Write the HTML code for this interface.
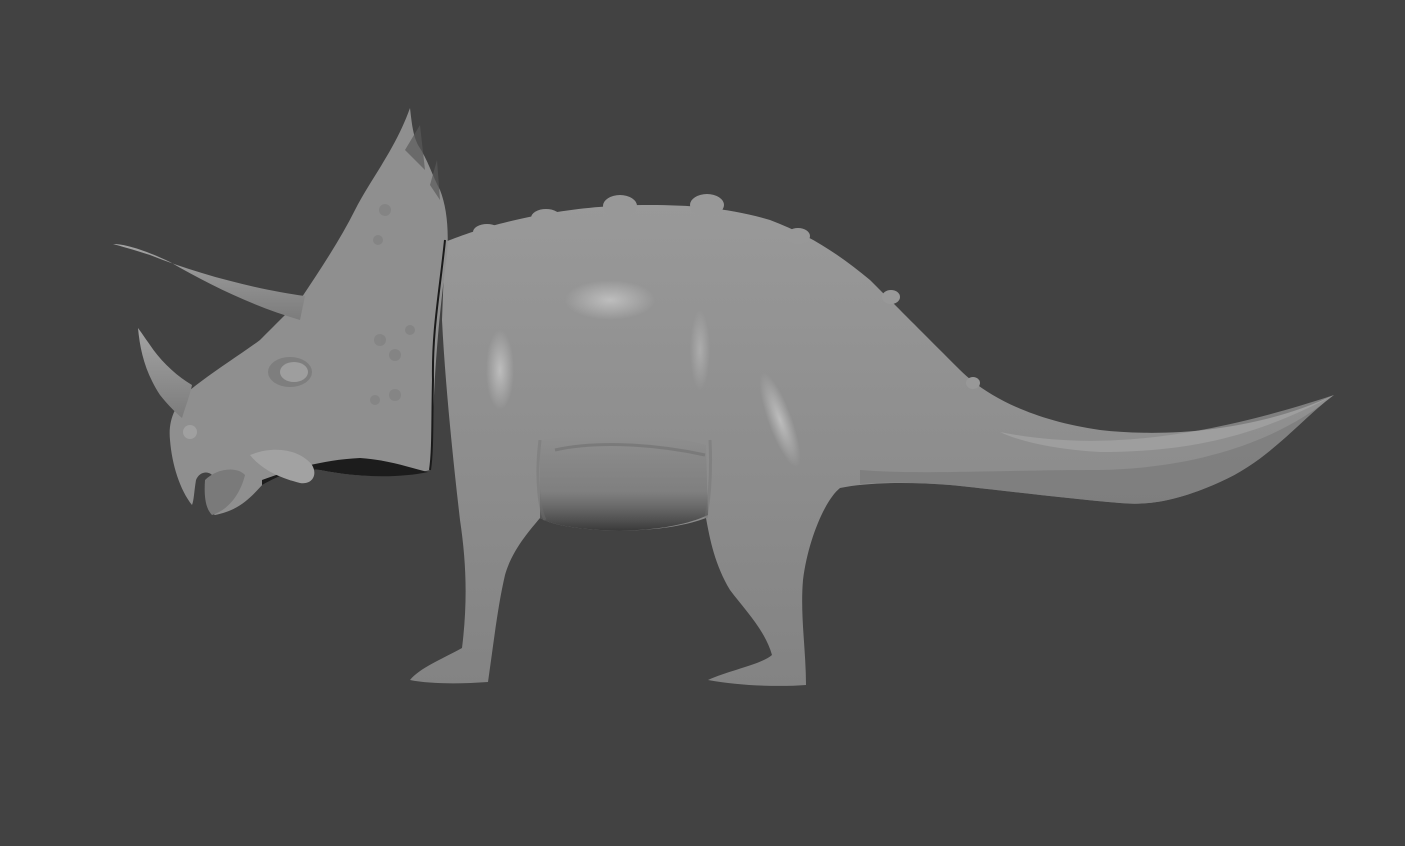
<!DOCTYPE html>
<html><head><meta charset="utf-8"><style>
html,body{margin:0;padding:0;background:#424242;width:1405px;height:846px;overflow:hidden}
svg{display:block}
</style></head><body>
<svg width="1405" height="846" viewBox="0 0 1405 846" xmlns="http://www.w3.org/2000/svg">
<defs>
<linearGradient id="bg" x1="0" y1="0" x2="0" y2="1">
<stop offset="0" stop-color="#999999"/><stop offset="0.5" stop-color="#8e8e8e"/><stop offset="1" stop-color="#838383"/>
</linearGradient>
<linearGradient id="belly" x1="0" y1="0" x2="0" y2="1">
<stop offset="0" stop-color="#7c7c7c" stop-opacity="0"/><stop offset="0.6" stop-color="#7a7a7a" stop-opacity="0.7"/><stop offset="1" stop-color="#3a3a3a"/>
</linearGradient>
<linearGradient id="tailg" x1="0" y1="0" x2="0" y2="1">
<stop offset="0" stop-color="#929292" stop-opacity="0"/><stop offset="1" stop-color="#6a6a6a"/>
</linearGradient>
<radialGradient id="hl" cx="0.5" cy="0.5" r="0.5">
<stop offset="0" stop-color="#c8c8c8" stop-opacity="0.8"/><stop offset="1" stop-color="#c8c8c8" stop-opacity="0"/>
</radialGradient>
<linearGradient id="horn" x1="0" y1="0" x2="0" y2="1">
<stop offset="0" stop-color="#a4a4a4"/><stop offset="1" stop-color="#7c7c7c"/>
</linearGradient>
</defs>

<path d="M445 242 C470 232 500 222 545 214 C580 208 610 205 650 205 C690 205 730 208 770 220 C810 235 840 255 870 280 C890 300 915 325 960 370 C985 395 1030 420 1100 430 C1170 438 1260 430 1334 395 C1300 420 1270 460 1220 482 C1180 500 1150 506 1120 503 C1060 498 1000 490 950 485 C910 482 870 482 840 488 C825 500 808 540 803 580 C800 615 806 650 806 685 C780 687 740 686 708 680 C730 670 760 665 772 655 C765 630 745 610 730 590 C715 565 710 540 706 518 C680 528 640 532 600 530 C570 528 550 524 540 518 C530 530 512 550 505 575 C498 605 494 640 488 682 C460 684 430 684 410 680 C420 668 440 660 462 648 C468 600 466 560 460 520 C452 450 445 380 442 320 Z" fill="url(#bg)"/>
<path d="M540 440 C600 430 660 432 706 445 L708 515 C680 528 640 532 600 530 C570 528 550 524 540 518 Z" fill="url(#belly)"/>
<path d="M860 470 C920 475 1000 470 1100 470 C1200 468 1280 440 1334 395 C1300 420 1270 460 1220 482 C1180 500 1150 506 1120 503 C1060 498 1000 490 950 485 C910 482 880 482 860 484 Z" fill="#777" opacity="0.6"/>
<path d="M1000 432 C1080 448 1180 446 1334 395 C1250 440 1180 452 1100 452 C1060 450 1020 442 1000 432Z" fill="#a8a8a8" opacity="0.6"/>
<g fill="#989898">
<ellipse cx="487" cy="232" rx="14" ry="8"/>
<ellipse cx="546" cy="218" rx="15" ry="9"/>
<ellipse cx="620" cy="206" rx="17" ry="11"/>
<ellipse cx="707" cy="205" rx="17" ry="11"/>
<ellipse cx="798" cy="236" rx="12" ry="8"/>
<ellipse cx="891" cy="297" rx="9" ry="7"/>
<ellipse cx="973" cy="383" rx="7" ry="6"/>
</g>
<ellipse cx="500" cy="370" rx="14" ry="40" fill="url(#hl)"/>
<ellipse cx="780" cy="420" rx="12" ry="50" fill="url(#hl)" transform="rotate(-20 780 420)"/>
<ellipse cx="610" cy="300" rx="45" ry="20" fill="url(#hl)"/>
<ellipse cx="700" cy="350" rx="10" ry="40" fill="url(#hl)" opacity="0.6"/>
<path d="M555 450 C600 440 660 445 705 455" stroke="#707070" stroke-width="3" fill="none" opacity="0.6"/>
<path d="M540 440 C535 480 540 510 545 520" stroke="#707070" stroke-width="3" fill="none" opacity="0.4"/>
<path d="M710 440 C712 480 708 505 706 518" stroke="#707070" stroke-width="3" fill="none" opacity="0.4"/>

<path d="M300 300 C320 270 340 240 355 210 C370 180 395 150 410 108 C412 125 413 135 418 145 C428 160 432 175 440 190 C448 210 450 240 445 270 C440 310 435 360 433 420 C432 445 433 460 430 470 C400 478 360 478 320 470 C300 468 290 470 265 482 C250 498 240 510 215 515 C205 510 208 495 215 480 C212 470 200 470 196 480 C194 492 194 500 192 505 C180 490 172 465 170 440 C168 420 175 405 190 390 C215 370 240 355 260 340 C275 325 290 310 300 300 Z" fill="#8f8f8f"/>
<path d="M262 480 C290 470 320 460 360 458 C390 460 410 468 428 472 C400 478 360 478 320 470 C300 468 285 472 262 485 Z" fill="#1c1c1c"/>
<path d="M205 480 C215 470 235 465 245 475 C240 495 228 510 212 515 C205 508 204 495 205 480Z" fill="#7a7a7a"/>
<path d="M250 455 C275 445 300 450 312 465 C318 475 312 485 300 483 C280 478 262 470 250 455Z" fill="#a2a2a2"/>
<ellipse cx="290" cy="372" rx="22" ry="15" fill="#7e7e7e"/>
<ellipse cx="294" cy="372" rx="14" ry="10" fill="#9e9e9e"/>
<circle cx="190" cy="432" r="7" fill="#a0a0a0"/>
<path d="M405 150 L420 125 L425 170Z" fill="#5a5a5a" opacity="0.7"/>
<path d="M430 185 L437 160 L440 200Z" fill="#5a5a5a" opacity="0.7"/>
<g fill="#7e7e7e" opacity="0.6">
<circle cx="380" cy="340" r="6"/><circle cx="395" cy="355" r="6"/><circle cx="375" cy="400" r="5"/><circle cx="395" cy="395" r="6"/><circle cx="410" cy="330" r="5"/><circle cx="385" cy="210" r="6"/><circle cx="378" cy="240" r="5"/>
</g>
<path d="M445 240 C440 290 432 330 433 380 C432 420 433 450 430 470" stroke="#1a1a1a" stroke-width="2" fill="none"/>

<path d="M305 296 C260 290 200 275 150 255 C135 250 120 246 113 244 C125 244 145 250 170 262 C210 285 250 305 300 320 Z" fill="url(#horn)"/>
<path d="M138 328 C140 350 145 372 160 395 C168 405 175 412 182 418 C186 405 190 395 192 385 C175 375 160 360 150 345 C145 338 141 332 138 328 Z" fill="url(#horn)"/>
</svg>
</body></html>
